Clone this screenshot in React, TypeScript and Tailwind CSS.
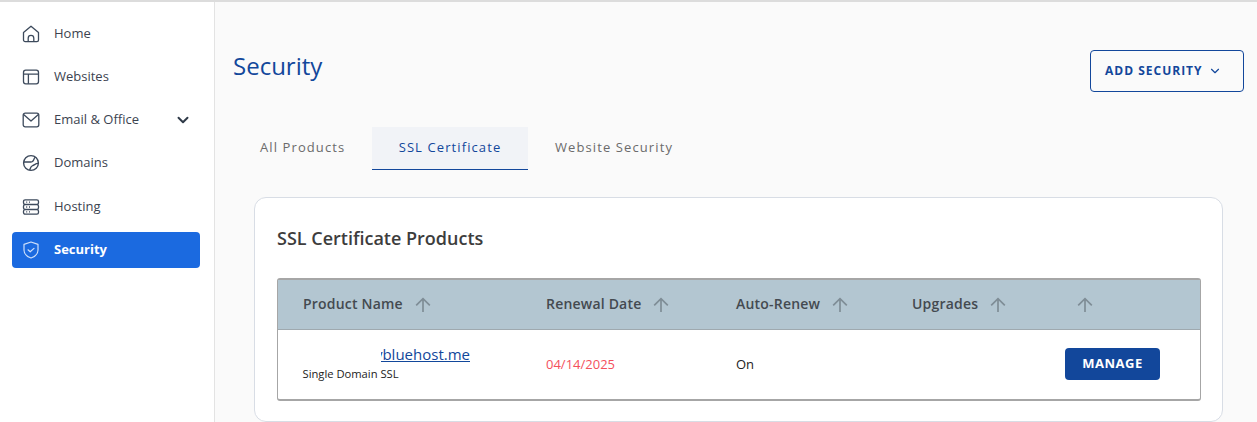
import { ChevronDown } from 'lucide-react'
import type { ReactNode } from 'react'

const iconClass = 'w-[18px] h-[18px] shrink-0'

function HomeIcon() {
  return (
    <svg viewBox="0 0 18 18" fill="none" stroke="currentColor" strokeWidth="1.3" strokeLinejoin="round" className={iconClass}>
      <path d="M1.5 15V7.6L9 1.2l7.5 6.4V15a1.6 1.6 0 0 1-1.6 1.6H3.1A1.6 1.6 0 0 1 1.5 15Z" />
      <path d="M6.2 16.6v-3.4a2.8 2.8 0 0 1 5.6 0v3.4" />
    </svg>
  )
}

function WebsitesIcon() {
  return (
    <svg viewBox="0 0 18 18" fill="none" stroke="currentColor" strokeWidth="1.3" className={iconClass}>
      <rect x="1.5" y="2.2" width="15" height="13.6" rx="2.2" />
      <path d="M1.5 6.2h15M6.4 6.2v9.6" />
    </svg>
  )
}

function MailIcon() {
  return (
    <svg viewBox="0 0 18 18" fill="none" stroke="currentColor" strokeWidth="1.3" strokeLinejoin="round" className={iconClass}>
      <rect x="1.2" y="2.2" width="15.6" height="13.6" rx="2" />
      <path d="M1.6 3.4 9 10l7.4-6.6" />
    </svg>
  )
}

function GlobeIcon() {
  return (
    <svg viewBox="0 0 18 18" fill="none" stroke="currentColor" strokeWidth="1.4" strokeLinejoin="round" className={iconClass}>
      <circle cx="9" cy="9" r="7.4" />
      <path d="M13.4 3c-2.2 1.6-.8 3.6-3.2 4.6-2.6 1-5 .1-8.4.4" />
      <path d="M16.2 9.4c-2.6-.2-3.6 1.6-5.6 2.2-2.2.7-2 2.6-3 4.6" />
    </svg>
  )
}

function HostingIcon() {
  return (
    <svg viewBox="0 0 18 18" fill="none" stroke="currentColor" strokeWidth="1.3" className={iconClass}>
      <rect x="1.5" y="1.8" width="15" height="4.6" rx="1.6" />
      <rect x="1.5" y="6.7" width="15" height="4.6" rx="1.6" />
      <rect x="1.5" y="11.6" width="15" height="4.6" rx="1.6" />
      <path d="M4.2 4.1h1M7 4.1h1M4.2 9h1M7 9h1M4.2 13.9h1M7 13.9h1" />
    </svg>
  )
}

function ShieldIcon() {
  return (
    <svg viewBox="0 0 18 18" fill="none" stroke="currentColor" strokeWidth="1.2" strokeLinecap="round" strokeLinejoin="round" className={iconClass}>
      <path d="M9 1 16 3.4V9c0 3.8-3 6.6-7 8-4-1.4-7-4.2-7-8V3.4L9 1Z" />
      <path d="m6 8.8 2.2 2 3.8-3.4" />
    </svg>
  )
}

function SortArrow() {
  return (
    <svg viewBox="0 0 16 16" fill="none" stroke="#7f8d96" strokeWidth="1.7" className="w-4 h-4 shrink-0">
      <path d="M8 15V1.8M1.2 8.4 8 1.6l6.8 6.8" />
    </svg>
  )
}

function NavItem({ icon, label, active, chevron, className = '' }: { icon: ReactNode; label: string; active?: boolean; chevron?: boolean; className?: string }) {
  return (
    <div
      className={`flex items-center h-9 pl-[10px] pr-2 rounded text-[13px] ${className} ${
        active ? 'bg-[#1b6ae0] text-white font-bold' : 'text-[#3c4350]'
      }`}
    >
      <span className={active ? 'text-[#cfe0fa]' : 'text-[#3d4a5c]'}>{icon}</span>
      <span className="ml-[14px] flex-1">{label}</span>
      {chevron && <ChevronDown className="w-[18px] h-[18px] text-[#2f3a48]" strokeWidth={2.6} />}
    </div>
  )
}

function HeaderCell({ label, className }: { label: string; className: string }) {
  return (
    <div className={`flex items-center gap-3 ${className}`}>
      <span className="mb-[2px]">{label}</span>
      <SortArrow />
    </div>
  )
}

export default function App() {
  return (
    <div className="w-[1257px] h-[422px] overflow-hidden flex flex-col bg-[#fafafa] font-['Open_Sans',sans-serif]">
      <div className="h-[2px] bg-[#dcdcdc] shrink-0" />
      <div className="flex flex-1 min-h-0">
        <aside className="w-[215px] shrink-0 bg-white border-r border-[#e3e3e3] pt-[13.9px] pl-3 pr-[14px] flex flex-col gap-[7px]">
          <NavItem icon={<HomeIcon />} label="Home" />
          <NavItem icon={<WebsitesIcon />} label="Websites" />
          <NavItem icon={<MailIcon />} label="Email & Office" chevron />
          <NavItem icon={<GlobeIcon />} label="Domains" />
          <NavItem icon={<HostingIcon />} label="Hosting" className="mt-[1px]" />
          <NavItem icon={<ShieldIcon />} label="Security" active />
        </aside>

        <main className="flex-1 min-w-0 pl-[18px] pr-[13px]">
          <div className="flex items-start justify-between pt-[46px]">
            <h1 className="text-2xl leading-[36px] text-[#12479b]">Security</h1>
            <button className="flex items-center w-[154px] h-[42px] mt-[2px] pl-[14px] rounded border border-[#12479b] text-[#12479b] text-[12px] font-bold tracking-[1px]">
              ADD SECURITY
              <ChevronDown className="w-[14px] h-[14px] ml-[5px]" strokeWidth={2} />
            </button>
          </div>

          <div className="flex mt-[35px] text-[13px] tracking-[1.1px] text-[#6b6b6b]">
            <div className="w-[139px] h-[43px] flex items-center pl-[27px] pb-[1px]">All Products</div>
            <div className="w-[156px] h-[43px] flex items-center justify-center bg-[#f1f3f7] border-b border-[#12479b] text-[#12479b]">
              SSL Certificate
            </div>
            <div className="h-[43px] flex items-center pl-[27px] pb-[1px]">Website Security</div>
          </div>

          <section className="mt-[27px] ml-[21px] w-[969px] h-[225px] rounded-xl border border-[#d8dde5] bg-white pt-[28px] px-[22px]">
            <h2 className="text-lg leading-6 font-semibold text-[#3d3d3d]">SSL Certificate Products</h2>
            <div className="mt-[28px] w-[924px] rounded-[3px] border border-[#a6a6a6] border-t-2 border-b-2 bg-white">
              <div className="flex items-center h-[50px] bg-[#b3c6d1] border-b border-[#9fa9af] text-sm tracking-[0.2px] font-semibold text-[#444a50]">
                <HeaderCell label="Product Name" className="w-[268px] pl-[25px]" />
                <HeaderCell label="Renewal Date" className="w-[190px]" />
                <HeaderCell label="Auto-Renew" className="w-[176px]" />
                <HeaderCell label="Upgrades" className="w-[165px]" />
                <SortArrow />
              </div>
              <div className="flex items-center h-[69px] text-[13px]">
                <div className="w-[268px] pl-[24.5px] pb-[3px]">
                  <div className="flex justify-end w-[89px] ml-[78.5px] overflow-hidden">
                    <a className="text-[15px] leading-5 text-[#12479b] underline whitespace-nowrap">mybluehost.me</a>
                  </div>
                  <div className="text-[11.2px] leading-4 mt-[2px] text-[#222]">Single Domain SSL</div>
                </div>
                <div className="w-[190px] text-[#f4505c]">04/14/2025</div>
                <div className="w-[329px] text-[#222]">On</div>
                <button className="w-[95px] h-8 mb-[2px] rounded bg-[#12479b] text-white text-[13px] font-bold tracking-[0.5px]">MANAGE</button>
              </div>
            </div>
          </section>
        </main>
      </div>
    </div>
  )
}
